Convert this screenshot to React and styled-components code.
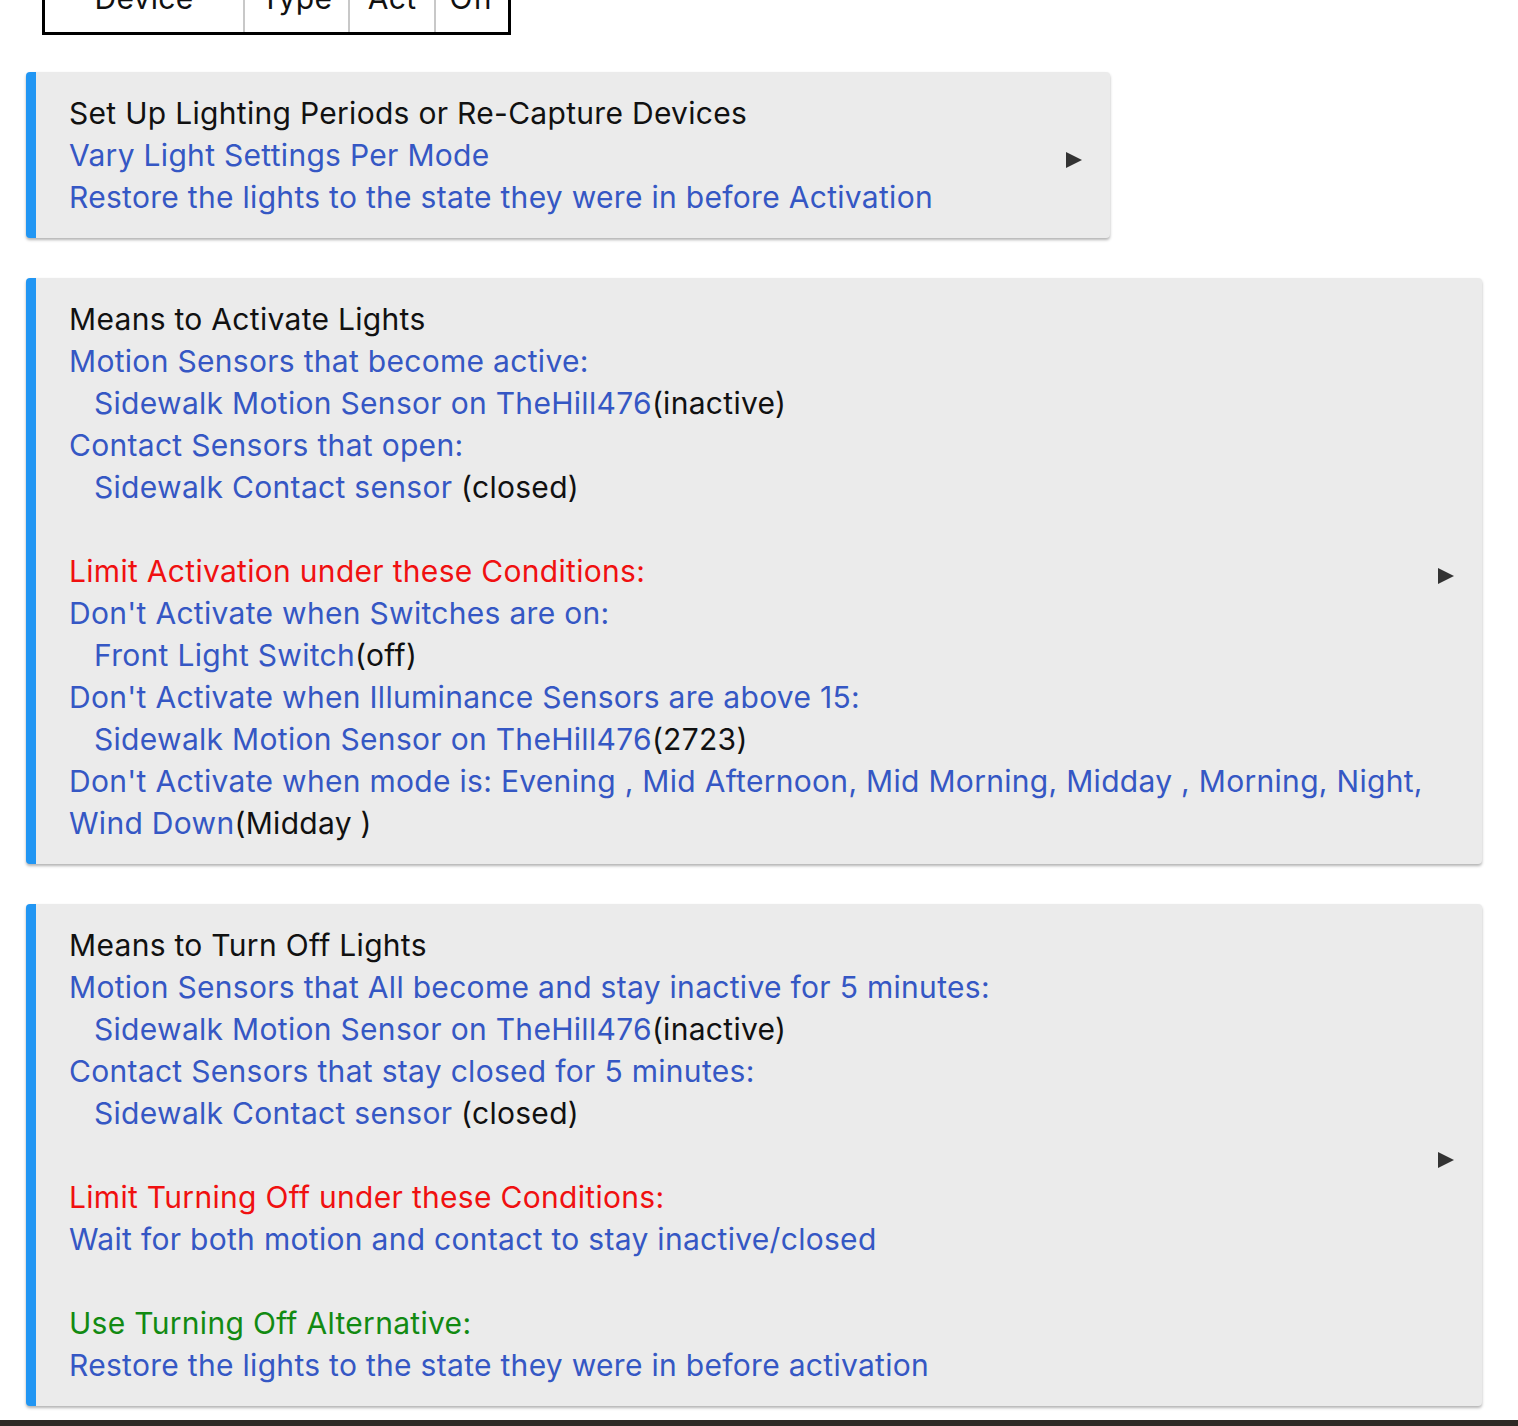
import React from "react";
import styled, { createGlobalStyle } from "styled-components";

const Global = createGlobalStyle`
  html, body { margin: 0; padding: 0; background: #fff; }
  body { font-family: Inter, "Noto Sans", "Liberation Sans", sans-serif; overflow: hidden; }
`;

const Page = styled.div`
  width: 1518px;
  height: 1426px;
  overflow: hidden;
  display: flex;
  flex-direction: column;
`;

const TableWrap = styled.div`
  margin: -43px 0 0 42px;
`;

const Table = styled.table`
  border-collapse: collapse;
  border: 3px solid #000;
  font-size: 30px;
  line-height: 42px;
  letter-spacing: 0.3px;
  color: #111;
`;

const Th = styled.th`
  font-weight: 400;
  padding: 17px 0 13px;
  width: ${(p) => p.w}px;
  text-align: center;
  border-left: ${(p) => (p.first ? "none" : "2px solid #c8c8c8")};
`;

const Cards = styled.div`
  display: flex;
  flex-direction: column;
  align-items: flex-start;
  gap: 40px;
  padding: 37px 36px 0 26px;
`;

const Card = styled.div`
  box-sizing: border-box;
  width: ${(p) => p.w}px;
  display: flex;
  align-items: center;
  background: #ebebeb;
  border-left: 10px solid #2196f3;
  border-radius: 4px;
  box-shadow: 0 2px 3px rgba(0, 0, 0, 0.3);
  padding: 20px 28px 20px 33px;
`;

const Body = styled.div`
  flex: 1;
  font-size: 30px;
  line-height: 42px;
  letter-spacing: 0.3px;
`;

const Line = styled.div`
  min-height: 42px;
  padding-left: ${(p) => (p.indent ? 25 : 0)}px;
  color: ${(p) =>
    p.tone === "title"
      ? "#111"
      : p.tone === "red"
      ? "#f01010"
      : p.tone === "green"
      ? "#128a12"
      : "#3557c4"};
`;

const Value = styled.span`
  color: #111;
`;

const Arrow = styled.div`
  flex: none;
  width: 0;
  height: 0;
  margin-top: 10px;
  border-top: 8px solid transparent;
  border-bottom: 8px solid transparent;
  border-left: 16px solid #333;
`;

const Footer = styled.div`
  margin-top: 14px;
  height: 40px;
  background: #2f2a26;
`;

export default function App() {
  return (
    <Page>
      <Global />
      <TableWrap>
        <Table>
          <thead>
            <tr>
              <Th first w={198}>Device</Th>
              <Th w={103}>Type</Th>
              <Th w={84}>Act</Th>
              <Th w={72}>Off</Th>
            </tr>
          </thead>
        </Table>
      </TableWrap>
      <Cards>
        <Card w={1084}>
          <Body>
            <Line tone="title">Set Up Lighting Periods or Re-Capture Devices</Line>
            <Line>Vary Light Settings Per Mode</Line>
            <Line>Restore the lights to the state they were in before Activation</Line>
          </Body>
          <Arrow />
        </Card>
        <Card w={1456}>
          <Body>
            <Line tone="title">Means to Activate Lights</Line>
            <Line>Motion Sensors that become active:</Line>
            <Line indent>
              Sidewalk Motion Sensor on TheHill476<Value>(inactive)</Value>
            </Line>
            <Line>Contact Sensors that open:</Line>
            <Line indent>
              Sidewalk Contact sensor <Value>(closed)</Value>
            </Line>
            <Line />
            <Line tone="red">Limit Activation under these Conditions:</Line>
            <Line>Don't Activate when Switches are on:</Line>
            <Line indent>
              Front Light Switch<Value>(off)</Value>
            </Line>
            <Line>Don't Activate when Illuminance Sensors are above 15:</Line>
            <Line indent>
              Sidewalk Motion Sensor on TheHill476<Value>(2723)</Value>
            </Line>
            <Line>
              Don't Activate when mode is: Evening , Mid Afternoon, Mid Morning, Midday , Morning, Night,
              Wind Down<Value>(Midday )</Value>
            </Line>
          </Body>
          <Arrow />
        </Card>
        <Card w={1456}>
          <Body>
            <Line tone="title">Means to Turn Off Lights</Line>
            <Line>Motion Sensors that All become and stay inactive for 5 minutes:</Line>
            <Line indent>
              Sidewalk Motion Sensor on TheHill476<Value>(inactive)</Value>
            </Line>
            <Line>Contact Sensors that stay closed for 5 minutes:</Line>
            <Line indent>
              Sidewalk Contact sensor <Value>(closed)</Value>
            </Line>
            <Line />
            <Line tone="red">Limit Turning Off under these Conditions:</Line>
            <Line>Wait for both motion and contact to stay inactive/closed</Line>
            <Line />
            <Line tone="green">Use Turning Off Alternative:</Line>
            <Line>Restore the lights to the state they were in before activation</Line>
          </Body>
          <Arrow />
        </Card>
      </Cards>
      <Footer />
    </Page>
  );
}
